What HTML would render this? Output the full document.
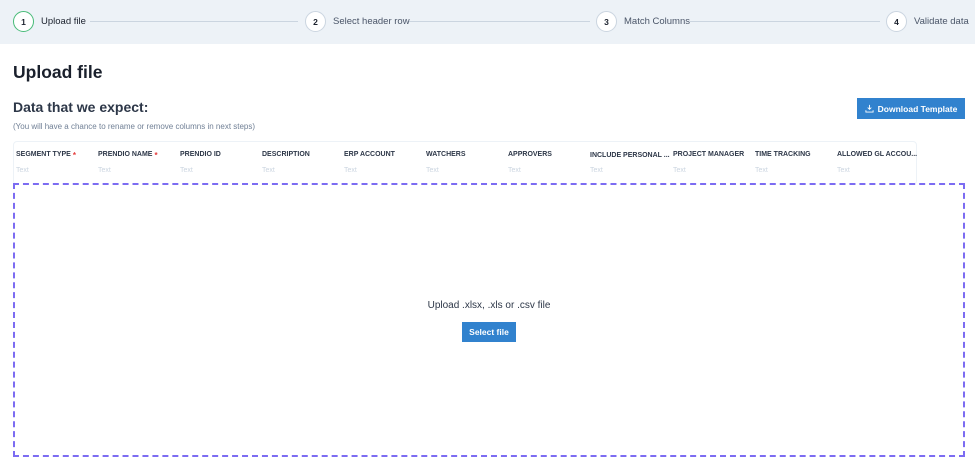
<!DOCTYPE html>
<html><head><style>
*{margin:0;padding:0;box-sizing:border-box}
body{width:975px;height:467px;background:#fff;font-family:"Liberation Sans",sans-serif;color:#1a202c;position:relative;overflow:hidden}
.top{position:absolute;left:0;top:0;width:975px;height:44px;background:#edf2f7}
.step{position:absolute;top:11px;display:flex;align-items:center;font-size:9.5px;color:#4a5568}
.c{width:21px;height:21px;border-radius:50%;background:#fff;border:1px solid #cbd5e0;font-size:8.5px;font-weight:bold;display:flex;align-items:center;justify-content:center;margin-right:7px;color:#1a202c}
.line{position:absolute;top:21px;height:1px;background:#cbd5e0}
.abs{position:absolute}
.th{position:absolute;top:151px;font-size:7px;font-weight:bold;color:#2d3748;white-space:nowrap}
.tx{position:absolute;top:167px;font-size:7px;color:#cbd5e0}
.req{color:#e53e3e;font-size:8px;vertical-align:top;margin-left:2px}
</style></head><body>
<div class="top"></div>
<div class="line" style="left:90px;width:208px"></div>
<div class="line" style="left:408px;width:182px"></div>
<div class="line" style="left:690px;width:190px"></div>
<div class="step" style="left:13px"><div class="c" style="border:1.5px solid #48bb78">1</div><span style="color:#1a202c">Upload file</span></div>
<div class="step" style="left:305px"><div class="c">2</div>Select header row</div>
<div class="step" style="left:596px"><div class="c">3</div>Match Columns</div>
<div class="step" style="left:886px"><div class="c">4</div>Validate data</div>
<div class="abs" style="left:13px;top:62px;font-size:17.5px;font-weight:bold">Upload file</div>
<div class="abs" style="left:13px;top:99px;font-size:14px;font-weight:bold;color:#2d3748">Data that we expect:</div>
<div class="abs" style="left:13px;top:122px;font-size:8px;color:#718096">(You will have a chance to rename or remove columns in next steps)</div>
<div class="abs" style="left:857px;top:98px;width:108px;height:21px;background:#3182ce;color:#fff;font-size:8.5px;font-weight:bold;display:flex;align-items:center;justify-content:center"><svg width="9" height="9" viewBox="0 0 10 10" style="margin-right:4px"><path d="M5 1v5M3 4l2 2 2-2M1 7v2h8V7" stroke="#fff" fill="none" stroke-width="1"/></svg>Download Template</div>
<div class="abs" style="left:13px;top:141px;width:904px;height:44px;border:1px solid #edf2f7;border-radius:4px"></div>
<div class="th" style="left:16px">SEGMENT TYPE<span class="req">*</span></div>
<div class="th" style="left:98px">PRENDIO NAME<span class="req">*</span></div>
<div class="th" style="left:180px">PRENDIO ID</div>
<div class="th" style="left:262px">DESCRIPTION</div>
<div class="th" style="left:344px">ERP ACCOUNT</div>
<div class="th" style="left:426px">WATCHERS</div>
<div class="th" style="left:508px">APPROVERS</div>
<div class="th" style="left:590px;top:152px">INCLUDE PERSONAL ...</div>
<div class="th" style="left:673px">PROJECT MANAGER</div>
<div class="th" style="left:755px">TIME TRACKING</div>
<div class="th" style="left:837px">ALLOWED GL ACCOU...</div>
<div class="tx" style="left:16px">Text</div><div class="tx" style="left:98px">Text</div><div class="tx" style="left:180px">Text</div><div class="tx" style="left:262px">Text</div><div class="tx" style="left:344px">Text</div><div class="tx" style="left:426px">Text</div><div class="tx" style="left:508px">Text</div><div class="tx" style="left:590px">Text</div><div class="tx" style="left:673px">Text</div><div class="tx" style="left:755px">Text</div><div class="tx" style="left:837px">Text</div>
<div class="abs" style="left:13px;top:183px;width:952px;height:274px;border:2px dashed #7c6cf2;background:#fff"></div>
<div class="abs" style="left:0;width:978px;top:300px;text-align:center;font-size:10px;color:#2d3748">Upload .xlsx, .xls or .csv file</div>
<div class="abs" style="left:462px;top:322px;width:54px;height:20px;background:#3182ce;color:#fff;font-size:8.5px;font-weight:bold;display:flex;align-items:center;justify-content:center">Select file</div>
</body></html>
